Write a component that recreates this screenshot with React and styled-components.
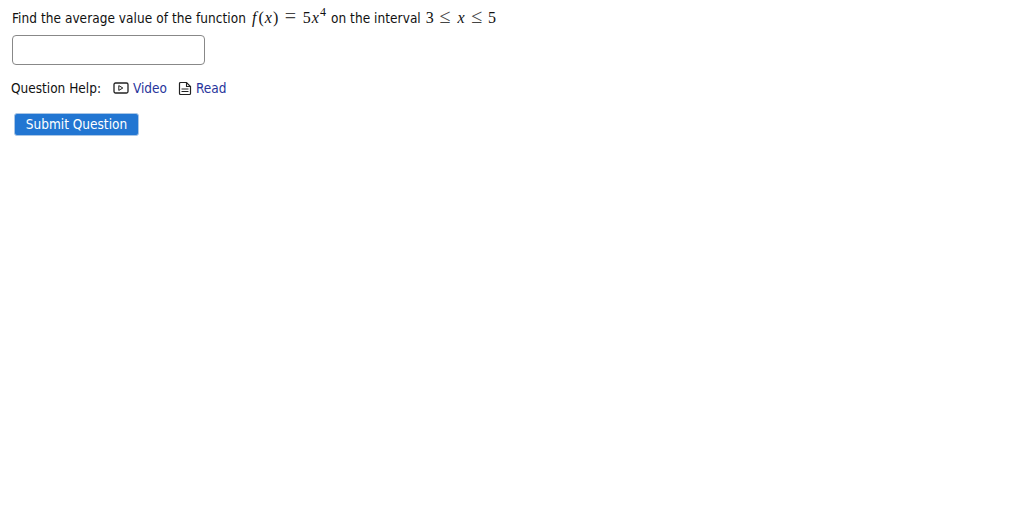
import * as React from "react";
import styled, { createGlobalStyle } from "styled-components";

const GlobalStyle = createGlobalStyle`
  html, body {
    margin: 0;
    background: #fff;
  }
  body {
    font: 13.5px/18px "DejaVu Sans Condensed", "DejaVu Sans", sans-serif;
    color: #111;
  }
`;

function App() {
  return (
    <Page>
      <GlobalStyle />
      <Prompt>
        Find the average value of the function
        <MathText>
          <Func>f</Func>(<Var>x</Var>)<Rel>=</Rel>5<Var>x</Var>
          <Sup>4</Sup>
        </MathText>
        on the interval
        <MathText>
          3<Rel $gap="5.75px">≤</Rel>
          <Var>x</Var>
          <Rel $gap="5.75px">≤</Rel>5
        </MathText>
      </Prompt>
      <Answer type="text" aria-label="Answer" />
      <Help>
        <HelpLabel>Question Help:</HelpLabel>
        <HelpLink href="#video">
          <svg width="16" height="12" viewBox="0 0 16 12" fill="none">
            <rect x="1" y="1" width="14" height="10" rx="1.5" stroke="#222" strokeWidth="1.3" />
            <path d="M5.8 3.6v4.8l4-2.4z" stroke="#222" strokeWidth="1" />
          </svg>
          Video
        </HelpLink>
        <HelpLink href="#read">
          <svg width="14" height="15" viewBox="0 0 14 15" fill="none">
            <path d="M1.5 2.5a1 1 0 0 1 1-1h6l4 4v7a1 1 0 0 1-1 1h-9a1 1 0 0 1-1-1z" stroke="#222" strokeWidth="1.2" />
            <path d="M8.5 1.5v4h4M3.5 8h7M3.5 10.5h7" stroke="#222" strokeWidth="1.1" />
          </svg>
          Read
        </HelpLink>
      </Help>
      <Submit type="button">Submit Question</Submit>
    </Page>
  );
}

const Page = styled.div`
  display: flex;
  flex-direction: column;
  align-items: flex-start;
  padding: 9px 0 0 12px;
`;

const Prompt = styled.div`
  white-space: nowrap;
  letter-spacing: 0.05px;
`;

const MathText = styled.span`
  font: 16px/18px "Liberation Serif", serif;
  margin: 0 5px;
`;

const Var = styled.i`
  font-style: italic;
  margin: 0 1px;
`;

const Func = styled.i`
  font-style: italic;
  margin: 0 2px 0 1px;
`;

const Rel = styled.span`
  margin: 0 ${(p) => p.$gap || "6.5px"};
  font-size: 20px;
  line-height: 0;
  color: #444;
`;

const Sup = styled.sup`
  font-size: 12px;
  line-height: 0;
  vertical-align: 7px;
`;

const Answer = styled.input`
  box-sizing: border-box;
  width: 193px;
  height: 30px;
  margin-top: 8px;
  border: 1px solid #888;
  border-radius: 4px;
  background: #fff;
`;

const Help = styled.div`
  display: flex;
  align-items: center;
  height: 18px;
  margin-top: 14px;
  margin-left: -1px;
`;

const HelpLabel = styled.span`
  margin-right: 12px;
`;

const HelpLink = styled.a`
  display: inline-flex;
  align-items: center;
  gap: 4px;
  margin-right: 11px;
  color: #27349b;
  text-decoration: none;
`;

const Submit = styled.button`
  box-sizing: border-box;
  width: 125px;
  height: 23px;
  margin: 16px 0 0 2px;
  padding: 0 0 1px;
  border: 1px solid #a9c6e6;
  border-radius: 3px;
  background: #2276d2;
  color: #fff;
  font: 13.5px/18px "DejaVu Sans Condensed", "DejaVu Sans", sans-serif;
`;

export default App;
